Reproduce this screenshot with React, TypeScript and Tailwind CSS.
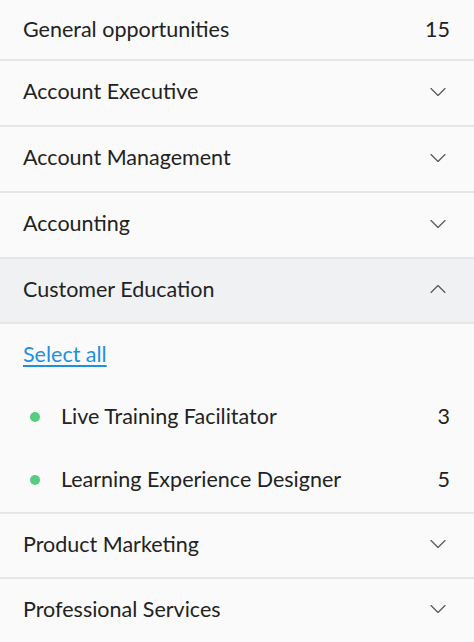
import { ChevronDown, ChevronUp } from "lucide-react";

const font = { fontFamily: "Lato, 'Noto Sans', sans-serif" };

function Row({ label, open, short }: { label: string; open?: boolean; short?: boolean }) {
  return (
    <div
      className={`flex items-center justify-between border-b-2 border-[#e6e6e6] pb-[3px] pl-[23px] pr-[22px] ${
        short ? "h-[65px]" : "h-[66px]"
      } ${open ? "bg-[#f0f1f3]" : ""}`}
    >
      <span className="text-[21.5px] text-[#222]">{label}</span>
      {open ? (
        <ChevronUp size={28} strokeWidth={1} className="text-[#555]" />
      ) : (
        <ChevronDown size={28} strokeWidth={1} className="text-[#555]" />
      )}
    </div>
  );
}

function Job({ title, count }: { title: string; count: number }) {
  return (
    <div className="flex h-[63px] items-center justify-between pb-[2px] pl-[30px] pr-[24px]">
      <div className="flex items-center gap-[21px]">
        <span className="h-[10px] w-[10px] rounded-full bg-[#55cc80]" />
        <span className="text-[21.5px] text-[#222]">{title}</span>
      </div>
      <span className="text-[21.5px] text-[#222]">{count}</span>
    </div>
  );
}

export default function App() {
  return (
    <div className="min-h-screen w-[474px] bg-[#fafafa]" style={font}>
      <div className="flex h-[61px] items-center justify-between border-b-2 border-[#e6e6e6] pl-[23px] pr-[24px]">
        <span className="text-[21.5px] text-[#222]">General opportunities</span>
        <span className="text-[21.5px] text-[#222]">15</span>
      </div>
      <Row label="Account Executive" />
      <Row label="Account Management" />
      <Row label="Accounting" />
      <Row label="Customer Education" open short />
      <div className="border-b-2 border-[#e6e6e6]">
        <div className="flex h-[62px] items-center pb-[2px] pl-[23px]">
          <a href="#" className="text-[21.5px] text-[#1e8fe1] underline underline-offset-[3px]">
            Select all
          </a>
        </div>
        <Job title="Live Training Facilitator" count={3} />
        <Job title="Learning Experience Designer" count={5} />
      </div>
      <Row label="Product Marketing" short />
      <Row label="Professional Services" short />
    </div>
  );
}
